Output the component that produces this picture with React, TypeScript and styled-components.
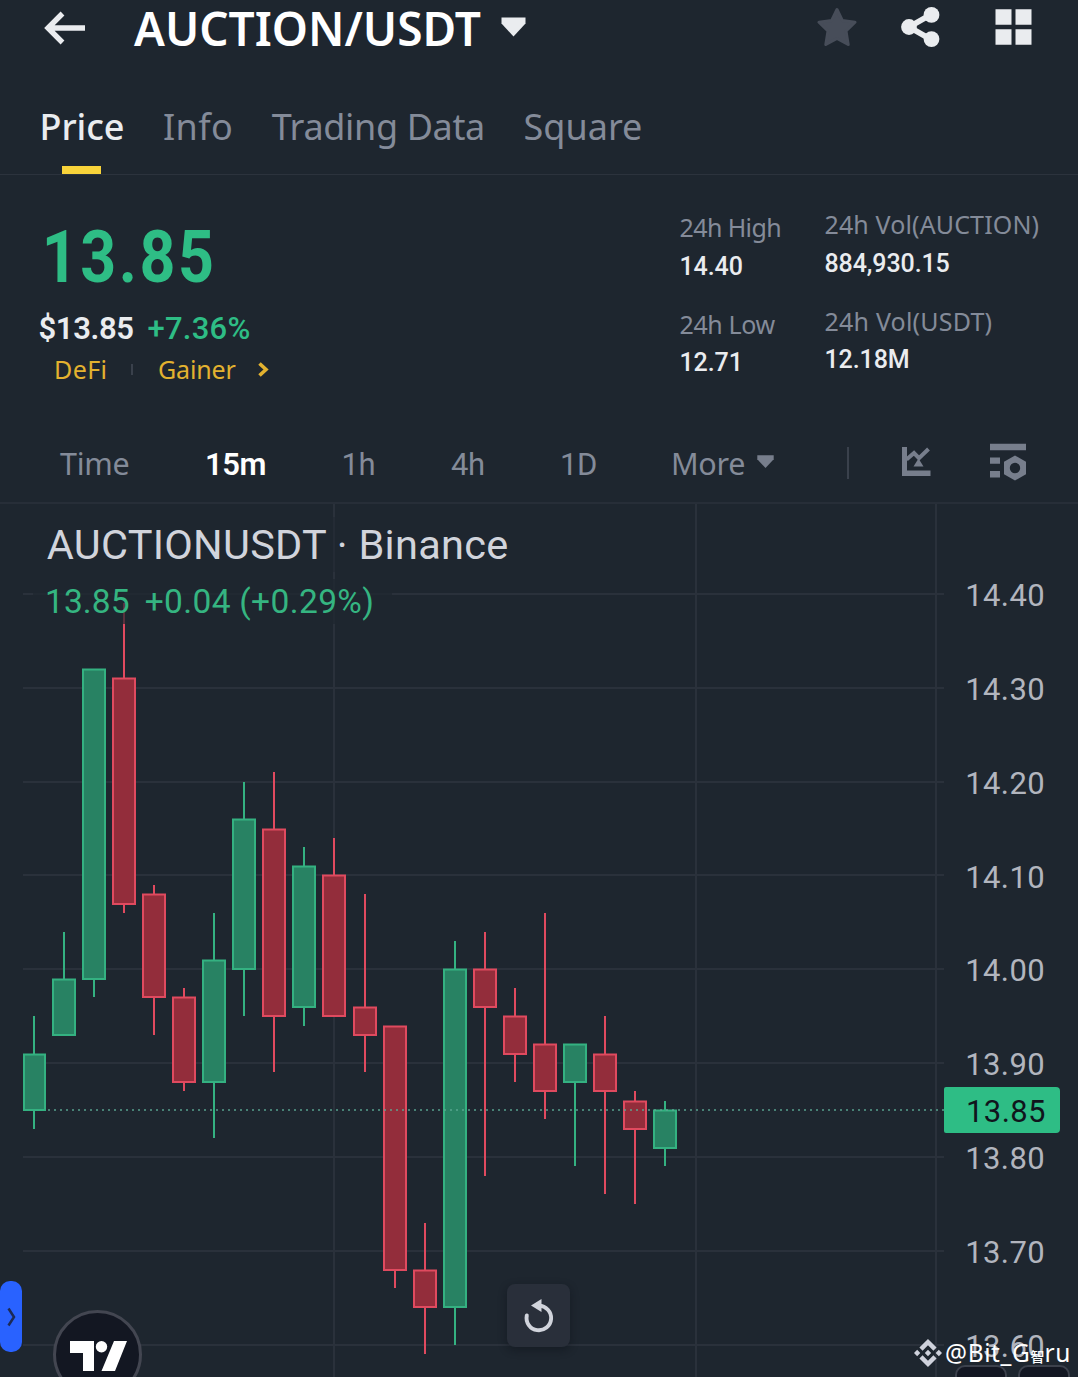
import React from 'react';
import styled, { createGlobalStyle } from 'styled-components';

const color = {
  bg: '#1e262f',
  line: '#2c333d',
  grid: '#2a313b',
  white: '#eaecef',
  muted: '#848b99',
  icon: '#777e8c',
  green: '#2ebd85',
  gold: '#e3b22f',
  axis: '#b2b5be',
  panel: '#131722',
  outline: '#434651',
};

const sans = '"Noto Sans", sans-serif';
const numeric = 'Roboto, sans-serif';

const GlobalStyle = createGlobalStyle`
  * { box-sizing: border-box; }
  html, body { margin: 0; background: ${color.bg}; }
  svg { display: block; flex: none; }
`;

const Screen = styled.div`
  display: flex;
  flex-direction: column;
  width: 1078px;
  height: 1377px;
  overflow: hidden;
  background: ${color.bg};
  color: ${color.white};
  font-family: ${sans};
  white-space: nowrap;
`;

/* ---------- header ---------- */

const Header = styled.header`
  display: flex;
  align-items: center;
  height: 55px;
  padding: 0 46px 0 44px;
`;

const Title = styled.h1`
  margin: 1px 0 0 49px;
  font-size: 46px;
  font-weight: 600;
  line-height: 54px;
  color: #fff;
`;

const TitleCaret = styled.svg`
  margin: -1px 0 0 20px;
`;

const HeaderActions = styled.div`
  display: grid;
  grid-template-columns: 84px 94px 37px;
  align-items: center;
  margin: -1px 0 0 auto;
`;

/* ---------- tabs ---------- */

const Tabs = styled.nav`
  display: flex;
  gap: 38.6px;
  height: 120px;
  padding: 46.5px 38px 0 39.6px;
  border-bottom: 1px solid ${color.line};
`;

const Tab = styled.div<{ $active?: boolean; $spacing?: string }>`
  display: flex;
  flex-direction: column;
  align-items: center;
  gap: 14.5px;
  font-size: 36px;
  font-weight: ${(p) => (p.$active ? 500 : 400)};
  line-height: 50px;
  letter-spacing: ${(p) => p.$spacing ?? 'normal'};
  color: ${(p) => (p.$active ? color.white : color.muted)};
`;

const TabMarker = styled.span`
  width: 39px;
  height: 8px;
  background: #f8d33a;
`;

/* ---------- ticker ---------- */

const Ticker = styled.section`
  display: grid;
  grid-template-columns: 641px 145px 1fr;
  height: 250px;
  padding: 31px 0 0 38.5px;
`;

const Quote = styled.div`
  padding-top: 15.6px;
`;

const LastPrice = styled.div`
  margin-left: 2px;
  font: 700 72px/72px ${numeric};
  letter-spacing: 3px;
  color: ${color.green};
  transform: scaleX(0.87);
  transform-origin: 5px 50%;
`;

const QuoteLine = styled.div`
  display: flex;
  gap: 14px;
  margin-top: 17.5px;
  font: 600 31px/36px ${numeric};
  letter-spacing: -0.39px;
`;

const Change = styled.span`
  font-weight: 500;
  letter-spacing: 0.25px;
  color: ${color.green};
`;

const Tags = styled.div`
  display: flex;
  align-items: center;
  margin: 7px 0 0 15.5px;
  font-size: 25px;
  line-height: 30px;
  color: ${color.gold};
`;

const Tag = styled.span<{ $spacing: string }>`
  letter-spacing: ${(p) => p.$spacing};
`;

const TagDivider = styled.i`
  width: 2px;
  height: 11px;
  margin: 0 24.5px 0 24px;
  background: #3a414c;
`;

const TagArrow = styled.svg`
  margin-left: 22px;
`;

const StatColumn = styled.div<{ $drop?: boolean }>`
  display: flex;
  flex-direction: column;
  gap: 21px;
  padding-top: ${(p) => (p.$drop ? '3.3px' : '0px')};
`;

const Stat = styled.div`
  display: flex;
  flex-direction: column;
  gap: 3.5px;
  line-height: 36px;
  font-size: 25px;
`;

const StatLabel = styled.span<{ $spacing: string }>`
  letter-spacing: ${(p) => p.$spacing};
  color: ${color.muted};
`;

const StatValue = styled.span`
  font-family: ${numeric};
  font-weight: 500;
  letter-spacing: -0.1px;
`;

/* ---------- interval toolbar ---------- */

const Toolbar = styled.div`
  display: grid;
  grid-template-columns: 145px 136.5px 109.5px 109px 111px 175.5px 55.5px 88px auto;
  align-items: center;
  height: 79px;
  padding: 2px 0 0 60px;
  border-bottom: 2px solid #272e38;
`;

const Interval = styled.span<{ $active?: boolean; $word?: boolean }>`
  display: flex;
  align-items: center;
  margin-top: ${(p) => (p.$word ? '-3px' : '0')};
  font-family: ${(p) => (p.$word ? sans : numeric)};
  font-size: ${(p) => (p.$word ? '30.5px' : '31px')};
  font-weight: ${(p) => (p.$active ? 600 : 400)};
  line-height: 40px;
  letter-spacing: ${(p) => (p.$word ? '-0.3px' : '-0.5px')};
  color: ${(p) => (p.$active ? '#fff' : color.muted)};
`;

const MoreCaret = styled.svg`
  margin: -3px 0 0 12px;
`;

const ToolbarDivider = styled.i`
  width: 2px;
  height: 32px;
  margin-top: -4px;
  background: #3a414c;
`;

const ToolIcon = styled.svg`
  margin-top: -6px;
`;

/* ---------- chart ---------- */

const Chart = styled.section`
  position: relative;
  display: grid;
  height: 873px;
  overflow: hidden;

  > * { grid-area: 1 / 1; }
`;

const Legend = styled.div`
  display: flex;
  flex-direction: column;
  align-items: flex-start;
  align-self: start;
  gap: 7px;
  padding: 12.7px 0 0 33px;
  font-family: ${numeric};
`;

const LegendTitle = styled.div`
  padding: 0 12px 0 13.8px;
  background: rgba(30, 38, 47, 0.5);
  font-size: 41.5px;
  line-height: 55px;
  letter-spacing: 0.27px;
  color: #d1d4dc;
`;

const LegendValues = styled.div`
  display: flex;
  gap: 15px;
  padding: 0 18px 0 12px;
  background: rgba(30, 38, 47, 0.7);
  font-size: 33.5px;
  line-height: 45px;
  letter-spacing: 0.1px;
  color: #35b581;
`;

const LegendDelta = styled.span`
  letter-spacing: 0.38px;
  word-spacing: -0.3px;
`;

const Axis = styled.div`
  justify-self: end;
  width: 112.7px;
  padding-top: 45.2px;
  font: 400 31px/93.8px ${numeric};
  letter-spacing: 0.35px;
  color: ${color.axis};
`;

const AxisLabel = styled.div`
  height: 93.8px;
`;

const PriceTag = styled.div`
  position: absolute;
  left: 944px;
  top: 583px;
  width: 116px;
  height: 46px;
  padding-left: 22px;
  border-radius: 2px 4px 4px 2px;
  background: ${color.green};
  font: 400 31px/50px ${numeric};
  letter-spacing: 0.4px;
  color: #10151c;
`;

const DrawerHandle = styled.div`
  position: absolute;
  left: 0;
  top: 777px;
  display: grid;
  place-items: center;
  width: 22px;
  height: 71px;
  border-radius: 10px;
  background: #2962ff;
`;

const ChartBadge = styled.div`
  position: absolute;
  left: 53px;
  top: 806px;
  width: 89px;
  height: 89px;
  padding: 28px 0 0 14px;
  border: 3px solid ${color.outline};
  border-radius: 50%;
  background: ${color.panel};
`;

const ResetButton = styled.div`
  position: absolute;
  left: 507px;
  top: 780px;
  display: grid;
  place-items: center;
  width: 63px;
  height: 63px;
  border-radius: 8px;
  background: #292f3a;
  box-shadow: 0 3px 8px rgba(12, 16, 22, 0.45);
`;

const BottomKeys = styled.div`
  position: absolute;
  left: 955px;
  top: 861px;
  display: flex;
  gap: 11px;
`;

const BottomKey = styled.i`
  width: 52px;
  height: 40px;
  border: 2px solid #3c414c;
  border-radius: 10px;
  background: ${color.panel};
`;

const Watermark = styled.div`
  position: absolute;
  left: 914px;
  top: 834px;
  display: flex;
  align-items: center;
  gap: 3px;
  height: 30px;
  font-size: 24.5px;
  line-height: 30px;
  letter-spacing: 0.6px;
  color: #fff;
`;

const WatermarkGlyph = styled.span`
  font: 500 14px/14px "Noto Sans CJK SC", sans-serif;
  letter-spacing: 0;
`;

/* ---------- data ---------- */

type Candle = [high: number, open: number, close: number, low: number];

const candles: Candle[] = [
  [13.95, 13.85, 13.91, 13.83],
  [14.04, 13.93, 13.99, 13.93],
  [14.32, 13.99, 14.32, 13.97],
  [14.39, 14.31, 14.07, 14.06],
  [14.09, 14.08, 13.97, 13.93],
  [13.98, 13.97, 13.88, 13.87],
  [14.06, 13.88, 14.01, 13.82],
  [14.2, 14.0, 14.16, 13.95],
  [14.21, 14.15, 13.95, 13.89],
  [14.13, 13.96, 14.11, 13.94],
  [14.14, 14.1, 13.95, 13.95],
  [14.08, 13.96, 13.93, 13.89],
  [13.94, 13.94, 13.68, 13.66],
  [13.73, 13.68, 13.64, 13.59],
  [14.03, 13.64, 14.0, 13.6],
  [14.04, 14.0, 13.96, 13.78],
  [13.98, 13.95, 13.91, 13.88],
  [14.06, 13.92, 13.87, 13.84],
  [13.92, 13.88, 13.92, 13.79],
  [13.95, 13.91, 13.87, 13.76],
  [13.87, 13.86, 13.83, 13.75],
  [13.86, 13.81, 13.85, 13.79],
];

const ticks = ['14.40', '14.30', '14.20', '14.10', '14.00', '13.90', '13.80', '13.70', '13.60'];
const sessions = [334, 696, 936];

const toY = (price: number) => Math.round(90 + (14.4 - price) * 938.2);
const toX = (index: number) => 34 + index * 30 + (index > 10 ? 1 : 0);

function Plot() {
  return (
    <svg width="1078" height="873" viewBox="0 0 1078 873">
      <g fill={color.grid}>
        {ticks.map((t) => (
          <rect key={t} x="23" y={toY(Number(t)) - 1} width="921" height="2" />
        ))}
        {sessions.map((x) => (
          <rect key={x} x={x - 1} y="0" width="2" height="873" />
        ))}
      </g>
      {candles.map(([high, open, close, low], i) => {
        const up = close > open;
        const x = toX(i);
        const top = toY(Math.max(open, close)) + 0.5;
        const bottom = toY(Math.min(open, close));
        const edge = up ? '#34b181' : '#e04a5f';
        const left = i === 0 ? x - 10 : x - 11;
        return (
          <g key={i}>
            <rect x={x - 1} y={toY(high)} width="2" height={toY(low) - toY(high)} fill={edge} />
            <rect
              x={left}
              y={top}
              width={x + 11 - left}
              height={bottom - top}
              fill={up ? '#288263' : '#932d3b'}
              stroke={edge}
              strokeWidth="2"
            />
          </g>
        );
      })}
      <line
        x1="48"
        x2="944"
        y1={toY(13.85)}
        y2={toY(13.85)}
        stroke="#5aa893"
        strokeOpacity="0.7"
        strokeWidth="2"
        strokeDasharray="2 4"
      />
    </svg>
  );
}

export default function App() {
  return (
    <Screen>
      <GlobalStyle />
      <Header>
        <svg width="41" height="34" viewBox="0 0 41 34" fill="none" stroke={color.white} strokeWidth="5.4">
          <path d="M4 17H41M18.500 2.500 4 17l14.500 14.500" />
        </svg>
        <Title>AUCTION/USDT</Title>
        <TitleCaret width="25" height="20" viewBox="0 0 25 20" fill={color.white}>
          <path d="M.5.5h24v6L12.5 19.5.5 6.500z" />
        </TitleCaret>
        <HeaderActions>
          <svg width="40" height="40" viewBox="0 0 40 40" fill="#474d59" stroke="#474d59" strokeWidth="3" strokeLinejoin="round">
            <path d="M20 2.500 25.300 13.500 38 15.200 29 24 31.200 37.500 20 31.500 8.800 37.500 11 24 2 15.200 14.700 13.500z" />
          </svg>
          <svg width="39" height="40" viewBox="0 0 39 40" fill={color.white}>
            <path d="M30 7.500 8 20l22 12.500" fill="none" stroke={color.white} strokeWidth="5.600" />
            <circle cx="8" cy="20" r="7.900" />
            <circle cx="30.500" cy="7.900" r="7.900" />
            <circle cx="30.500" cy="32.100" r="7.900" />
          </svg>
          <svg width="37" height="36" viewBox="0 0 37 36" fill={color.white}>
            <path d="M.5.200h16v15.500H.5zM20.500.200h16v15.500h-16zM.5 20.200h16v15.500H.5zM20.500 20.200h16v15.500h-16z" />
          </svg>
        </HeaderActions>
      </Header>

      <Tabs>
        <Tab $active $spacing="-0.1px">
          Price
          <TabMarker />
        </Tab>
        <Tab $spacing="0.4px">Info</Tab>
        <Tab $spacing="-0.35px">Trading Data</Tab>
        <Tab>Square</Tab>
      </Tabs>

      <Ticker>
        <Quote>
          <LastPrice>13.85</LastPrice>
          <QuoteLine>
            $13.85
            <Change>+7.36%</Change>
          </QuoteLine>
          <Tags>
            <Tag $spacing="0.4px">DeFi</Tag>
            <TagDivider />
            <Tag $spacing="-0.1px">Gainer</Tag>
            <TagArrow width="11" height="15" viewBox="0 0 11 15" fill="none" stroke={color.gold} strokeWidth="3.6">
              <path d="M1.500 1.500 8 7.500l-6.500 6" />
            </TagArrow>
          </Tags>
        </Quote>
        <StatColumn $drop>
          <Stat>
            <StatLabel $spacing="-0.6px">24h High</StatLabel>
            <StatValue>14.40</StatValue>
          </Stat>
          <Stat>
            <StatLabel $spacing="-0.4px">24h Low</StatLabel>
            <StatValue>12.71</StatValue>
          </Stat>
        </StatColumn>
        <StatColumn>
          <Stat>
            <StatLabel $spacing="0.13px">24h Vol(AUCTION)</StatLabel>
            <StatValue>884,930.15</StatValue>
          </Stat>
          <Stat>
            <StatLabel $spacing="0.21px">24h Vol(USDT)</StatLabel>
            <StatValue>12.18M</StatValue>
          </Stat>
        </StatColumn>
      </Ticker>

      <Toolbar>
        <Interval $word>Time</Interval>
        <Interval $active>15m</Interval>
        <Interval>1h</Interval>
        <Interval>4h</Interval>
        <Interval>1D</Interval>
        <Interval $word>
          More
          <MoreCaret width="17" height="13" viewBox="0 0 17 13" fill={color.icon}>
            <path d="M.3.300h16.400v4L8.500 13 .3 4.300z" />
          </MoreCaret>
        </Interval>
        <ToolbarDivider />
        <ToolIcon width="29" height="29" viewBox="0 0 29 29" fill={color.icon}>
          <path d="M0 0h5v23.500h23.500V29H0z" />
          <path d="M4.500 12.500 12 6l5 5.200L26.500 2" fill="none" stroke={color.icon} strokeWidth="4" />
          <path d="M16.500 11.500 21.500 19.500h-10z" />
        </ToolIcon>
        <ToolIcon width="36" height="38" viewBox="0 0 36 38" fill={color.icon}>
          <path d="M0 .800h36v6.500H0zM0 14.500h10v6.200H0zM0 28h10v6.500H0z" />
          <path fillRule="evenodd" d="M25 12.500 36 18.700v12.600L25 37.500 14 31.300V18.700zM25 19.800a5.200 5.200 0 1 0 0 10.400 5.200 5.200 0 0 0 0-10.400z" />
        </ToolIcon>
      </Toolbar>

      <Chart>
        <Plot />
        <Legend>
          <LegendTitle>AUCTIONUSDT · Binance</LegendTitle>
          <LegendValues>
            13.85
            <LegendDelta>+0.04 (+0.29%)</LegendDelta>
          </LegendValues>
        </Legend>
        <Axis>
          {ticks.map((t) => (
            <AxisLabel key={t}>{t}</AxisLabel>
          ))}
        </Axis>
        <PriceTag>13.85</PriceTag>
        <DrawerHandle>
          <svg width="9" height="20" viewBox="0 0 9 20" fill="none" stroke="#1c2a55" strokeWidth="2.500">
            <path d="M1.500 1.500 7 10l-5.500 8.500" />
          </svg>
        </DrawerHandle>
        <ChartBadge>
          <svg width="57" height="30" viewBox="0 0 57 30" fill="#fff">
            <path d="M0 0h24v30H13V12H0zM44 0h13L45 30H31.500z" />
            <circle cx="31.500" cy="5.800" r="5.700" />
          </svg>
        </ChartBadge>
        <ResetButton>
          <svg width="32" height="36" viewBox="0 0 32 36" fill="none">
            <path d="M3.800 17.500A12.300 12.300 0 1 0 16 7.700" stroke="#d1d4dc" strokeWidth="3.900" strokeLinecap="round" />
            <path d="M8 7.500 18.500 1v13z" fill="#d1d4dc" />
          </svg>
        </ResetButton>
        <BottomKeys>
          <BottomKey />
          <BottomKey />
        </BottomKeys>
        <Watermark>
          <svg width="28" height="28" viewBox="0 0 24 24" fill="#cfd2dc">
            <path d="M16.624 13.920l2.718 2.716-7.353 7.353-7.353-7.352 2.717-2.717 4.636 4.660 4.635-4.660zm4.637-4.636L24 12l-2.715 2.716L18.568 12l2.693-2.716zm-9.272 0l2.716 2.692-2.717 2.717L9.272 12l2.717-2.715zm-9.273 0L5.409 12l-2.692 2.692L0 12l2.716-2.716zM11.989.011l7.353 7.329-2.718 2.716-4.635-4.636-4.636 4.660-2.717-2.716 7.353-7.353z" />
          </svg>
          <span>
            @Bit_G<WatermarkGlyph>智</WatermarkGlyph>ru
          </span>
        </Watermark>
      </Chart>
    </Screen>
  );
}
